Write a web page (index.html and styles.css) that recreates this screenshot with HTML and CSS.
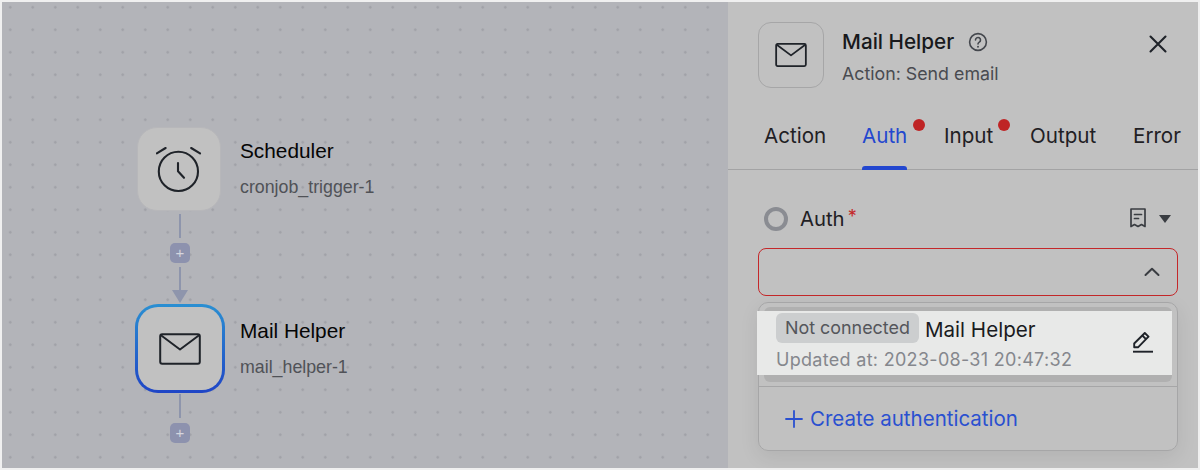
FILE: index.html
```html
<!DOCTYPE html>
<html lang="en">
<head>
<meta charset="utf-8">
<title>Mail Helper</title>
<link rel="stylesheet" href="styles.css">
</head>
<body>
<div class="frame">
  <main class="canvas">
    <div class="node node-scheduler">
      <div class="tile">
        <svg class="ico-clock" viewBox="0 0 46 46" fill="none" stroke="#1f2329" stroke-width="2.1" stroke-linecap="round" stroke-linejoin="round"><circle cx="22.4" cy="24.4" r="19.6"/><path d="M22 16v8.2l6 6.6"/><path d="M.8 6.4 9.6 1"/><path d="M44 6.4 35.2 1"/></svg>
      </div>
      <div class="node-text"><div class="node-title">Scheduler</div><div class="node-sub">cronjob_trigger-1</div></div>
    </div>
    <div class="link"><span class="line line-a"></span><span class="plus">+</span><span class="line line-b"></span><span class="arrow"></span></div>
    <div class="node node-mail">
      <div class="tile-ring"><div class="tile tile-in">
        <svg class="ico-mail" viewBox="0 0 42 32" fill="none" stroke="#1f2329" stroke-width="2" stroke-linejoin="round"><rect x="1.2" y="1.2" width="39.6" height="29.6" rx="2"/><path d="M1.6 2 21 16.5 40.4 2"/></svg>
      </div></div>
      <div class="node-text"><div class="node-title">Mail Helper</div><div class="node-sub">mail_helper-1</div></div>
    </div>
    <div class="link link-end"><span class="line line-end"></span><span class="plus">+</span></div>
  </main>
  <aside class="panel">
    <header class="head">
      <div class="head-tile"><svg class="ico-mail-sm" viewBox="0 0 42 32" fill="none" stroke="#1f2329" stroke-width="2.4" stroke-linejoin="round"><rect x="1.2" y="1.2" width="39.6" height="29.6" rx="2"/><path d="M1.6 2 21 16.5 40.4 2"/></svg></div>
      <div class="head-text">
        <div class="head-title"><span>Mail Helper</span><svg class="ico-help" viewBox="0 0 20 20" fill="none" stroke="#44474d" stroke-width="1.6" stroke-linecap="round"><circle cx="10" cy="10" r="8.4"/><path d="M7.5 8a2.5 2.5 0 1 1 3.8 2.1c-.8.5-1.3 1-1.3 1.9"/><path d="M10 14.6v.1" stroke-width="1.9"/></svg></div>
        <div class="head-sub">Action: Send email</div>
      </div>
      <svg class="ico-close" viewBox="0 0 18 18" fill="none" stroke="#1f2329" stroke-width="2.1" stroke-linecap="round"><path d="M1.5 1.5l15 15M16.5 1.5 1.5 16.5"/></svg>
    </header>
    <nav class="tabs">
      <span class="tab tab-action">Action</span>
      <span class="tab tab-auth active">Auth<i class="dot"></i></span>
      <span class="tab tab-input">Input<i class="dot"></i></span>
      <span class="tab tab-output">Output</span>
      <span class="tab tab-error">Error</span>
    </nav>
    <section class="body">
      <div class="field-head">
        <span class="ring"></span>
        <span class="field-label">Auth</span><span class="req">*</span>
        <span class="spacer"></span>
        <svg class="ico-doc" viewBox="0 0 16 20" fill="none" stroke="#3a3d42" stroke-width="1.7" stroke-linejoin="round" stroke-linecap="round"><path d="M1 1h14v17.5l-3.5-2-3.5 2-3.5-2L1 18.5z"/><path d="M4.5 6.5h7M4.5 10.5h4"/></svg>
        <span class="caret"></span>
      </div>
      <div class="select">
        <svg class="ico-chev" viewBox="0 0 16 10" fill="none" stroke="#3a3d42" stroke-width="2" stroke-linecap="round" stroke-linejoin="round"><path d="M1.5 8 8 1.8 14.5 8"/></svg>
      </div>
      <div class="dropdown">
        <div class="list">
          <div class="option">
            <div class="opt-main">
              <div class="opt-top"><span class="badge">Not connected</span><span class="opt-name">Mail Helper</span></div>
              <div class="opt-date">Updated at: 2023-08-31 20:47:32</div>
            </div>
            <svg class="ico-edit" viewBox="0 0 20 21" fill="none" stroke="#1f2329" stroke-width="1.9" stroke-linejoin="round" stroke-linecap="butt"><path d="M0 19.7h20"/><path d="M1.2 11.500 11.800 1l3.700 3.700L5 15.300H1.200z"/><path d="M9.300 3.500 13 7.200"/></svg>
          </div>
        </div>
        <div class="create">
          <svg class="ico-plus" viewBox="0 0 18 18" fill="none" stroke="#2a50d0" stroke-width="1.8" stroke-linecap="round"><path d="M9 1v16M1 9h16"/></svg>
          <span>Create authentication</span>
        </div>
      </div>
    </section>
  </aside>
</div>
</body>
</html>
```
FILE: styles.css
```css
* { box-sizing: border-box; }
html, body { margin: 0; height: 100%; }
body {
  width: 1200px; height: 470px; overflow: hidden;
  background: #f0f0f0;
  font-family: "Inter", "Liberation Sans", sans-serif;
}
.frame { display: flex; width: 1198px; height: 466px; margin: 2px 0 0 2px; }
.canvas {
  width: 726px; flex: none;
  background-color: #b3b4b9;
  background-image: radial-gradient(circle, #a0a1a7 1px, transparent 1.5px);
  background-size: 22.5px 22.5px;
  background-position: -3px -6px;
  padding: 125px 0 0 133px;
  display: flex; flex-direction: column;
  font-family: "Liberation Sans", sans-serif;
}
.node { display: flex; align-items: center; }
.tile {
  width: 84px; height: 84px; border-radius: 20px;
  background: #c1c1c1; border: 1px solid #b7b7ba;
  display: flex; align-items: center; justify-content: center;
}
.node-scheduler { margin-left: 2px; }
.ico-clock { width: 46px; height: 46px; margin-top: 1px; }
.ico-mail { width: 42px; height: 32px; }
.ico-mail-sm { width: 32px; height: 24px; }
.tile-ring {
  width: 90px; height: 89px; border-radius: 23px; padding: 3px;
  background: linear-gradient(180deg, #2a8fd2, #1f45c6);
}
.tile-in { width: 84px; height: 83px; border: none; }
.node-text { padding-bottom: 2px; }
.node-scheduler .node-text { margin-left: 19px; }
.node-mail .node-text { margin-left: 15px; }
.node-title { font-size: 20.8px; line-height: 24px; color: #050505; }
.node-sub { font-size: 17.8px; line-height: 20px; margin-top: 14px; color: #505257; }
.link { width: 90px; display: flex; flex-direction: column; align-items: center; height: 93px; }
.link-end { height: auto; }
.line { display: block; width: 2px; background: #8e95ac; flex: none; }
.line-a { height: 24px; margin-top: 3px; }
.line-b { height: 23px; margin-top: 4px; }
.line-end { height: 24px; margin-top: 1px; }
.plus {
  width: 20px; height: 20px; border-radius: 5px; margin-top: 5px; flex: none;
  background: #8d92ae; color: #d5d6de; font-size: 15px; line-height: 19px; text-align: center;
}
.arrow { width: 0; height: 0; border-style: solid; border-width: 13px 8px 0; border-color: #8e95ac transparent transparent; flex: none; }

.panel { width: 470px; flex: none; background: #c1c1c1; color: #1a1b1e; }
.head { display: flex; padding: 20px 31px 0 30px; height: 108px; }
.head-tile {
  width: 66px; height: 66px; border-radius: 13px; border: 1px solid #a6a6a7;
  display: flex; align-items: center; justify-content: center; flex: none;
}
.head-text { margin-left: 18px; padding-top: 7px; flex: 1; }
.head-title { display: flex; align-items: center; font-size: 20.7px; line-height: 26px; font-weight: 500; color: #18191c; }
.ico-help { width: 20px; height: 20px; margin-left: 14px; }
.head-sub { font-size: 17.8px; line-height: 20px; margin-top: 9px; color: #494b50; }
.ico-close { width: 18px; height: 18px; margin-top: 13px; }
.tabs { position: relative; height: 60px; border-bottom: 1px solid #a3a3a4; }
.tab { position: absolute; top: 13px; font-size: 20.6px; line-height: 26px; color: #1f2024; }
.tab-action { left: 36px; }
.tab-auth { left: 134px; }
.tab-input { left: 216px; }
.tab-output { left: 302px; }
.tab-error { left: 405px; }
.tab.active { color: #2347cf; }
.tab.active::after {
  content: ""; position: absolute; left: 0; right: 0; top: 43px; height: 4px;
  background: #2347cf; border-radius: 3px 3px 0 0;
}
.dot { position: absolute; width: 12px; height: 12px; border-radius: 50%; background: #bf2425; right: -18px; top: -4px; }
.tab-input .dot { right: -17px; }
.body { padding: 0 20px 0 30px; }
.field-head { display: flex; align-items: center; height: 26px; margin-top: 36px; padding: 0 7px 0 6px; }
.ring { width: 24px; height: 24px; border-radius: 50%; border: 4px solid #8a8c92; flex: none; }
.field-label { margin-left: 12px; padding-bottom: 2px; font-size: 20.3px; color: #1f2024; }
.req { color: #c4282a; font-size: 18px; margin-left: 3px; padding-bottom: 6px; }
.spacer { flex: 1; }
.ico-doc { width: 16px; height: 20px; margin: 0 0 2px -1px; }
.caret { width: 0; height: 0; border-style: solid; border-width: 8px 6.5px 0; border-color: #3a3d42 transparent transparent; margin-left: 13px; }
.select {
  height: 48px; margin-top: 16px; border: 1px solid #c4282a; border-radius: 8px;
  display: flex; align-items: center; justify-content: flex-end; padding-right: 17px;
}
.ico-chev { width: 16px; height: 10px; }
.dropdown {
  margin-top: 6px; height: 149px; border: 1px solid #a6a6a7; border-radius: 10px;
  box-shadow: 0 6px 20px rgba(0,0,0,.08);
}
.list { height: 84px; padding-top: 4px; border-bottom: 1px solid #a6a6a7; }
.option {
  position: relative; margin: 0 5px; height: 75px;
  background: #b0b0b0; border-radius: 6px; display: flex;
}
.option::before {
  content: ""; position: absolute; left: -7px; right: 0; top: 4px; height: 64px;
  background: #e8e9e8;
}
.opt-main { position: relative; padding: 6px 0 0 12px; flex: 1; }
.opt-top { display: flex; align-items: center; }
.badge { height: 30px; padding: 0 9px; line-height: 30px; border-radius: 6px; background: #cccecf; color: #54565b; font-size: 17.9px; }
.opt-name { margin-left: 6px; padding-top: 2px; font-size: 20.6px; color: #1a1b1e; }
.opt-date { font-size: 18px; letter-spacing: .3px; line-height: 20px; margin-top: 7px; color: #85878d; }
.ico-edit { position: relative; width: 20px; height: 21px; margin: 25px 19px 0 0; }
.create { display: flex; align-items: center; padding: 19px 0 0 26px; color: #2a50d0; font-size: 20.5px; line-height: 26px; }
.ico-plus { width: 18px; height: 18px; margin-right: 7px; }
```
